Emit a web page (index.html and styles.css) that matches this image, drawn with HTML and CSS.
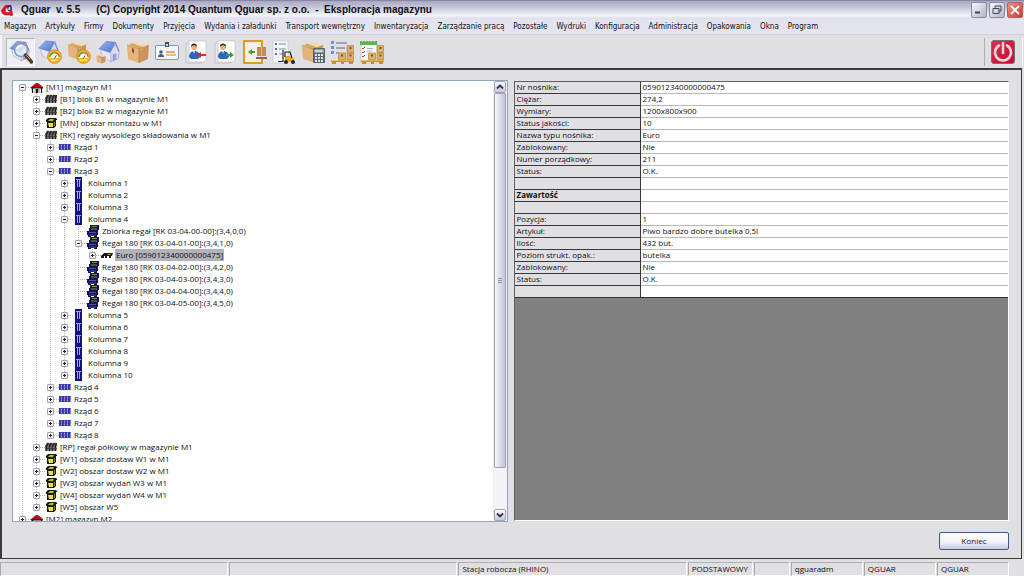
FILE: index.html
```html
<!DOCTYPE html>
<html lang="pl">
<head>
<meta charset="utf-8">
<title>Qguar v. 5.5 - Eksploracja magazynu</title>
<link rel="stylesheet" href="styles.css">
</head>
<body>
<svg class="defs" aria-hidden="true">
  <defs>
    <linearGradient id="roof" x1="0" y1="0" x2="1" y2="1"><stop offset="0" stop-color="#9db8f4"/><stop offset="1" stop-color="#4a6fd0"/></linearGradient>
    <linearGradient id="red" x1="0" y1="0" x2="1" y2="1"><stop offset="0" stop-color="#d8304c"/><stop offset="1" stop-color="#c00c30"/></linearGradient>
    <symbol id="house" viewBox="0 0 24 24">
      <path d="M3 11l2 7 9 5 6-4V8l-6-5z" fill="#e6e6f8" stroke="#a0a0cc" stroke-width=".6"/>
      <path d="M14 12l5-8 4 9-1 7-8 3z" fill="#dcdcf4" stroke="#8c8cc0" stroke-width=".6"/>
      <path d="M16 15l4-1v7l-4 1z" fill="#9c9cd8"/>
      <path d="M1 9L9 1l10 1-6 11z" fill="url(#roof)" stroke="#5570c0" stroke-width=".6"/>
      <path d="M19 2l4 10" stroke="#7c8cd0" stroke-width="1.2"/>
    </symbol>
    <symbol id="box" viewBox="0 0 24 24">
      <path d="M1 5l12 4v14L2 19z" fill="#e4b47c"/>
      <path d="M13 9l10-4-1 14-9 4z" fill="#cc9458"/>
      <path d="M1 5l10-4 12 4-10 4z" fill="#f6dab0"/>
      <path d="M6 3l11 4v3l-3 1-1-2L3 5z" fill="#d4a86c"/>
      <path d="M1 5l12 4 10-4M13 9v14" fill="none" stroke="#b07c44" stroke-width=".6"/>
    </symbol>
    <symbol id="gauge" viewBox="0 0 14 14">
      <circle cx="7" cy="7" r="6.4" fill="#f4b428" stroke="#d08818" stroke-width=".8"/>
      <path d="M2 8.500a5 5 0 0 1 10 0z" fill="#fff"/>
      <path d="M2.6 7.800A4.4 4.4 0 0 1 7 3.4" fill="none" stroke="#48b048" stroke-width="1.6"/>
      <path d="M7 3.4a4.4 4.4 0 0 1 4.4 4.400" fill="none" stroke="#e06038" stroke-width="1.4"/>
      <path d="M7 9l1.500-3" stroke="#444" stroke-width=".8"/>
      <path d="M3.500 10.500h7" stroke="#ffe060" stroke-width="1.4"/>
    </symbol>
    <symbol id="person" viewBox="0 0 24 24">
      <path d="M2 3h16v20H2z" fill="#e4e4ea" stroke="#b0b0bc" stroke-width=".6"/>
      <path d="M5 1h17v19l-2 2H5z" fill="#fff" stroke="#b8b8c4" stroke-width=".6"/>
      <circle cx="10" cy="7" r="3" fill="#e8b078"/>
      <path d="M7 6.500C7 2.500 13 2.500 13 6.500L10 5z" fill="#38281c"/>
      <path d="M5 17c0-8 11-8 11 0l-2 2H7z" fill="#2868b8"/>
      <path d="M9 11h2l-1 3z" fill="#d8ecff"/>
    </symbol>
    <symbol id="crates" viewBox="0 0 24 24">
      <path d="M1 20h23v2H1zM2 22h4v2H2zM11 22h3v2h-3zM19 22h4v2h-4z" fill="#c89028"/>
      <path d="M1 20.500h23" stroke="#f0c860"/>
      <path d="M17 5.500h6.500v7H17zM8.500 13h7v7h-7zM17 13h6.500v7H17z" fill="#d8b070" stroke="#b08840" stroke-width=".7"/>
      <path d="M19.500 7h2v2h-2zM11 14.500h2v2h-2zM19.500 14.500h2v2h-2z" fill="#7c5420"/>
    </symbol>
    <symbol id="t-wh" viewBox="0 0 12 12"><path d="M0 6l5-4h2l5 4v1H0z" fill="#b01020"/><path d="M0 7h12M1.500 7v5M10.500 7v5" stroke="#111" stroke-width="1.200"/><path d="M3 8h6v4H3z" fill="#bbb"/><path d="M5 8h2v4H5z" fill="#111"/></symbol>
    <symbol id="t-block" viewBox="0 0 12 12"><path d="M2 2h10l-1 3v5H0V5z" fill="#aaa"/><path d="M1.500 10V5l2-3M4.500 10V5l2-3M7.500 10V5l2-3M10.500 10V5l1-3" fill="none" stroke="#181818" stroke-width="1.700"/><path d="M0 5h12M0 7.500h12M1 3h10" stroke="#333" stroke-width=".7"/></symbol>
    <symbol id="t-area" viewBox="0 0 12 12"><path d="M3 1h8l1 1v1h-1v6l-2 2H2V5H1V3z" fill="#1c1c0a"/><path d="M3 6h5v4H4z" fill="#e4e048"/><path d="M3 4h5l1-2H5z" fill="#b8b850"/><path d="M9.500 5v4" stroke="#8c8c20"/></symbol>
    <symbol id="t-row" viewBox="0 0 12 12"><path d="M0 3h12v6H0z" fill="#9898dc"/><path d="M1 3v6M4 3v6M7 3v6M10 3v6" stroke="#202090" stroke-width="1.500"/><path d="M0 3.500h12M0 6h12M0 8.500h12" stroke="#3838a4" stroke-width=".6"/></symbol>
    <symbol id="t-col" viewBox="0 0 12 12"><path d="M2 0h7v12H2z" fill="#14147c"/><path d="M3 2.500h5M4.500 3v7M6.500 3v7" stroke="#b4b4e4" stroke-width=".9"/></symbol>
    <symbol id="t-shelf" viewBox="0 0 12 12"><path d="M3 0h9v5h-1v5h-1v2H7v-1H4v1H1v-2H0V6h2V3h1z" fill="#12125c"/><path d="M5 1.500h5M4 4h6" stroke="#8c8c40" stroke-width="1"/><path d="M2 7.500h7M2 10h7" stroke="#6c6cc4" stroke-width=".7"/></symbol>
    <symbol id="t-pallet" viewBox="0 0 12 12"><path d="M3 4h9l-1 3h-1v2H8V7H6v2H4V7H3v2H0V7z" fill="#15152c"/><path d="M7 5h3.500L9.500 6H6z" fill="#a09428"/></symbol>
  </defs>
</svg>

<header class="titlebar">
  <svg class="logo" viewBox="0 0 14 14" aria-hidden="true"><path d="M5 1h5l-3 3-2 1v4h4l1-3 2 1 1 5-2 1-2-1H4L1 10 0 7l3-4z" fill="#e01020"/><path d="M7 2l4-1 1 5-4 2-1-3z" fill="#24246c"/><path d="M8 4l2-1v3L8 7z" fill="#e8e8f8"/></svg>
  <h1>Qguar&nbsp; v. 5.5</h1>
  <span class="copy">(C) Copyright 2014 Quantum Qguar sp. z o.o.&nbsp; -&nbsp; Eksploracja magazynu</span>
  <div class="winbtns">
    <button type="button" aria-label="Minimalizuj"><svg viewBox="0 0 14 14"><path d="M3 9.500h5" stroke="#445" stroke-width="2"/></svg></button>
    <button type="button" aria-label="Przywróć"><svg viewBox="0 0 14 14"><path d="M5 5V3h6v5H9M3 5.500h6v5H3z" fill="none" stroke="#445" stroke-width="1"/></svg></button>
    <button type="button" class="close" aria-label="Zamknij"><svg viewBox="0 0 14 14"><path d="M3 3l8 8M11 3l-8 8" stroke="#fff" stroke-width="1.800"/></svg></button>
  </div>
</header>

<nav class="menu">
  <a href="#">Magazyn</a><a href="#">Artykuły</a><a href="#">Firmy</a><a href="#">Dokumenty</a><a href="#">Przyjęcia</a><a href="#">Wydania i załadunki</a><a href="#">Transport wewnętrzny</a><a href="#">Inwentaryzacja</a><a href="#">Zarządzanie pracą</a><a href="#">Pozostałe</a><a href="#">Wydruki</a><a href="#">Konfiguracja</a><a href="#">Administracja</a><a href="#">Opakowania</a><a href="#">Okna</a><a href="#">Program</a>
</nav>

<div class="toolbar">
  <div class="group">
    <button type="button" class="pressed" aria-label="Eksploracja magazynu"><svg viewBox="0 0 24 24"><use href="#house" width="21" height="22"/><circle cx="12" cy="10" r="6.500" fill="#dfeaf8" fill-opacity=".85" stroke="#8c98b4" stroke-width="1.500"/><path d="M8 9a4 4 0 0 1 5-3" fill="none" stroke="#fff" stroke-width="1.500"/><path d="M16.500 15l6 7" stroke="#54402c" stroke-width="3.500" stroke-linecap="round"/><path d="M17 15l4 4" stroke="#b09878" stroke-width="1"/></svg></button>
    <button type="button" aria-label="Stan magazynu"><svg viewBox="0 0 24 24"><use href="#house" width="21" height="21"/><use href="#gauge" x="9" y="9" width="15" height="15"/></svg></button>
    <button type="button" aria-label="Stan artykułów"><svg viewBox="0 0 24 24"><use href="#box" width="20" height="21"/><use href="#gauge" x="9" y="9" width="15" height="15"/></svg></button>
    <button type="button" aria-label="Miejsca"><svg viewBox="0 0 24 24"><use href="#house" x="2" width="22" height="23"/><use href="#box" x="0" y="14" width="10" height="10"/></svg></button>
  </div>
  <div class="group">
    <button type="button" aria-label="Artykuły"><svg viewBox="0 0 24 24"><use href="#box" width="24" height="24"/><path d="M6 8l2 1v5l-1-2-1 1z" fill="#805428"/></svg></button>
    <button type="button" aria-label="Firmy"><svg viewBox="0 0 24 24"><rect x=".5" y="5.500" width="23" height="14" rx="1.500" fill="#f4f8ff" stroke="#7c98c4"/><path d="M10 2h4v5h-4z" fill="#445068"/><path d="M11 4h2v2h-2z" fill="#c8d4e8"/><circle cx="6" cy="12" r="1.800" fill="#4c5c78"/><path d="M3 17c0-4 6-4 6 0z" fill="#4c5c78"/><path d="M11 12h9" stroke="#f09030" stroke-width="1.500"/><path d="M11 15h10" stroke="#f0a850" stroke-width="1.500"/></svg></button>
    <button type="button" aria-label="Przyjęcie"><svg viewBox="0 0 24 24"><use href="#person" width="24" height="24"/><path d="M13 15l4-3v2h5v2h-5v2z" fill="#e02830"/></svg></button>
    <button type="button" aria-label="Wydanie"><svg viewBox="0 0 24 24"><use href="#person" width="24" height="24"/><path d="M21 15l-4-3v2h-4v2h4v2z" fill="#30a838"/></svg></button>
  </div>
  <div class="group">
    <button type="button" aria-label="Dostawa"><svg viewBox="0 0 24 24"><path d="M1 1h18v22H1z" fill="#f4f0e8" stroke="#dc9c28" stroke-width="2"/><path d="M19 7v11" stroke="#e4e4ec" stroke-width="3"/><path d="M5 12l4-3v2h3v2H9v2z" fill="#48a030"/><path d="M14 7h9v9h-9z" fill="#c08c60"/><path d="M18.500 7v9" stroke="#e0b890" stroke-width="1"/><path d="M13 17h11v2H13z" fill="#986438"/></svg></button>
    <button type="button" aria-label="Transport"><svg viewBox="0 0 24 24"><path d="M1 1h15v22H1z" fill="#f6f8ff" stroke="#c0c8dc" stroke-width=".6"/><path d="M3 3h2v2H3zM3 8h2v2H3zM3 13h2v2H3z" fill="#5070b8"/><path d="M7 4h7M7 9h7M7 14h4" stroke="#7c8498" stroke-width="1"/><path d="M13 16h5l2 2h2v4h-9z" fill="#e8a820"/><path d="M13 17V12h5l2 6" fill="none" stroke="#222" stroke-width="1.200"/><path d="M11 10v12M6 21.500h5" stroke="#28282c" stroke-width="1.200"/><circle cx="14" cy="22" r="2" fill="#222"/><circle cx="21" cy="22" r="2" fill="#222"/></svg></button>
    <button type="button" aria-label="Inwentaryzacja"><svg viewBox="0 0 24 24"><use href="#box" width="23" height="24"/><rect x="12" y="8" width="12" height="15" rx="1" fill="#5c6470"/><path d="M13.500 9.500h9v3h-9z" fill="#c4dcc0"/><path d="M14 15h8M14 18h8M14 21h8" stroke="#e0e4ec" stroke-width="1.800" stroke-dasharray="2 1"/></svg></button>
    <button type="button" aria-label="Lista palet"><svg viewBox="0 0 24 24"><path d="M1 1h3v3H1zM1 6h3v3H1zM1 11h3v3H1z" fill="#7090d0"/><path d="M6 3h11M6 8h9M6 13h3" stroke="#606878" stroke-width="1"/><use href="#crates" width="24" height="24"/></svg></button>
  </div>
  <div class="group">
    <button type="button" aria-label="Kontrola palet"><svg viewBox="0 0 24 24"><path d="M1 2h16v21H1z" fill="#fbfbff" stroke="#a8c8a0" stroke-width=".6"/><path d="M0 1h17v4H0z" fill="#58b848"/><path d="M2 1h14" stroke="#e0f4dc" stroke-dasharray="1 2"/><path d="M2 8l1 1 2-2M2 12l1 1 2-2M2 16l1 1 2-2" fill="none" stroke="#d03848"/><path d="M7 8.500h6M7 11h5" stroke="#9098a8" stroke-width=".8"/><use href="#crates" width="24" height="24"/></svg></button>
  </div>
  <div class="exit">
    <button type="button" aria-label="Wyjście"><svg viewBox="0 0 24 24"><rect x=".5" y=".5" width="23" height="23" rx="2.500" fill="url(#red)" stroke="#806c74"/><path d="M8 5.500a8 8 0 1 0 8 0" fill="none" stroke="#ecd4dc" stroke-width="2.600" stroke-linecap="round"/><path d="M12 3v10" stroke="#ecd4dc" stroke-width="2.600" stroke-linecap="round"/></svg></button>
  </div>
</div>

<main class="workspace">
  <div class="panes">
    <section class="treebox" aria-label="Struktura magazynu">
      <ul class="tree">
        <li><div class="node"><button class="tw minus" aria-label="Zwiń"></button><i></i><svg><use href="#t-wh"/></svg><span>[M1] magazyn M1</span></div>
          <ul>
            <li><div class="node"><button class="tw" aria-label="Rozwiń"></button><i></i><svg><use href="#t-block"/></svg><span>[B1] blok B1 w magazynie M1</span></div></li>
            <li><div class="node"><button class="tw" aria-label="Rozwiń"></button><i></i><svg><use href="#t-block"/></svg><span>[B2] blok B2 w magazynie M1</span></div></li>
            <li><div class="node"><button class="tw" aria-label="Rozwiń"></button><i></i><svg><use href="#t-area"/></svg><span>[MN] obszar montażu w M1</span></div></li>
            <li><div class="node"><button class="tw minus" aria-label="Zwiń"></button><i></i><svg><use href="#t-block"/></svg><span>[RK] regały wysokiego składowania w M1</span></div>
              <ul>
                <li><div class="node"><button class="tw" aria-label="Rozwiń"></button><i></i><svg><use href="#t-row"/></svg><span>Rząd 1</span></div></li>
                <li><div class="node"><button class="tw" aria-label="Rozwiń"></button><i></i><svg><use href="#t-row"/></svg><span>Rząd 2</span></div></li>
                <li><div class="node"><button class="tw minus" aria-label="Zwiń"></button><i></i><svg><use href="#t-row"/></svg><span>Rząd 3</span></div>
                  <ul>
                    <li><div class="node"><button class="tw" aria-label="Rozwiń"></button><i></i><svg><use href="#t-col"/></svg><span>Kolumna 1</span></div></li>
                    <li><div class="node"><button class="tw" aria-label="Rozwiń"></button><i></i><svg><use href="#t-col"/></svg><span>Kolumna 2</span></div></li>
                    <li><div class="node"><button class="tw" aria-label="Rozwiń"></button><i></i><svg><use href="#t-col"/></svg><span>Kolumna 3</span></div></li>
                    <li><div class="node"><button class="tw minus" aria-label="Zwiń"></button><i></i><svg><use href="#t-col"/></svg><span>Kolumna 4</span></div>
                      <ul>
                        <li><div class="node leaf"><i></i><svg><use href="#t-shelf"/></svg><span>Zbiórka regał [RK 03-04-00-00]:(3,4,0,0)</span></div></li>
                        <li><div class="node"><button class="tw minus" aria-label="Zwiń"></button><i></i><svg><use href="#t-shelf"/></svg><span>Regał 180 [RK 03-04-01-00]:(3,4,1,0)</span></div>
                          <ul>
                            <li><div class="node"><button class="tw" aria-label="Rozwiń"></button><i></i><svg><use href="#t-pallet"/></svg><span class="selected">Euro [059012340000000475]</span></div></li>
                          </ul>
                        </li>
                        <li><div class="node leaf"><i></i><svg><use href="#t-shelf"/></svg><span>Regał 180 [RK 03-04-02-00]:(3,4,2,0)</span></div></li>
                        <li><div class="node leaf"><i></i><svg><use href="#t-shelf"/></svg><span>Regał 180 [RK 03-04-03-00]:(3,4,3,0)</span></div></li>
                        <li><div class="node leaf"><i></i><svg><use href="#t-shelf"/></svg><span>Regał 180 [RK 03-04-04-00]:(3,4,4,0)</span></div></li>
                        <li><div class="node leaf"><i></i><svg><use href="#t-shelf"/></svg><span>Regał 180 [RK 03-04-05-00]:(3,4,5,0)</span></div></li>
                      </ul>
                    </li>
                    <li><div class="node"><button class="tw" aria-label="Rozwiń"></button><i></i><svg><use href="#t-col"/></svg><span>Kolumna 5</span></div></li>
                    <li><div class="node"><button class="tw" aria-label="Rozwiń"></button><i></i><svg><use href="#t-col"/></svg><span>Kolumna 6</span></div></li>
                    <li><div class="node"><button class="tw" aria-label="Rozwiń"></button><i></i><svg><use href="#t-col"/></svg><span>Kolumna 7</span></div></li>
                    <li><div class="node"><button class="tw" aria-label="Rozwiń"></button><i></i><svg><use href="#t-col"/></svg><span>Kolumna 8</span></div></li>
                    <li><div class="node"><button class="tw" aria-label="Rozwiń"></button><i></i><svg><use href="#t-col"/></svg><span>Kolumna 9</span></div></li>
                    <li><div class="node"><button class="tw" aria-label="Rozwiń"></button><i></i><svg><use href="#t-col"/></svg><span>Kolumna 10</span></div></li>
                  </ul>
                </li>
                <li><div class="node"><button class="tw" aria-label="Rozwiń"></button><i></i><svg><use href="#t-row"/></svg><span>Rząd 4</span></div></li>
                <li><div class="node"><button class="tw" aria-label="Rozwiń"></button><i></i><svg><use href="#t-row"/></svg><span>Rząd 5</span></div></li>
                <li><div class="node"><button class="tw" aria-label="Rozwiń"></button><i></i><svg><use href="#t-row"/></svg><span>Rząd 6</span></div></li>
                <li><div class="node"><button class="tw" aria-label="Rozwiń"></button><i></i><svg><use href="#t-row"/></svg><span>Rząd 7</span></div></li>
                <li><div class="node"><button class="tw" aria-label="Rozwiń"></button><i></i><svg><use href="#t-row"/></svg><span>Rząd 8</span></div></li>
              </ul>
            </li>
            <li><div class="node"><button class="tw" aria-label="Rozwiń"></button><i></i><svg><use href="#t-block"/></svg><span>[RP] regał półkowy w magazynie M1</span></div></li>
            <li><div class="node"><button class="tw" aria-label="Rozwiń"></button><i></i><svg><use href="#t-area"/></svg><span>[W1] obszar dostaw W1 w M1</span></div></li>
            <li><div class="node"><button class="tw" aria-label="Rozwiń"></button><i></i><svg><use href="#t-area"/></svg><span>[W2] obszar dostaw W2 w M1</span></div></li>
            <li><div class="node"><button class="tw" aria-label="Rozwiń"></button><i></i><svg><use href="#t-area"/></svg><span>[W3] obszar wydań W3 w M1</span></div></li>
            <li><div class="node"><button class="tw" aria-label="Rozwiń"></button><i></i><svg><use href="#t-area"/></svg><span>[W4] obszar wydań W4 w M1</span></div></li>
            <li><div class="node"><button class="tw" aria-label="Rozwiń"></button><i></i><svg><use href="#t-area"/></svg><span>[W5] obszar W5</span></div></li>
          </ul>
        </li>
        <li><div class="node"><button class="tw" aria-label="Rozwiń"></button><i></i><svg><use href="#t-wh"/></svg><span>[M2] magazyn M2</span></div></li>
      </ul>
      <div class="scroll">
        <button type="button" aria-label="W górę"><svg viewBox="0 0 10 10"><path d="M2 6.500l3-3 3 3" fill="none" stroke="#334" stroke-width="1.800"/></svg></button>
        <div class="track"><div class="thumb"></div><div class="rest"></div></div>
        <button type="button" aria-label="W dół"><svg viewBox="0 0 10 10"><path d="M2 3.500l3 3 3-3" fill="none" stroke="#334" stroke-width="1.800"/></svg></button>
      </div>
    </section>

    <section class="details" aria-label="Szczegóły">
      <table>
        <tbody>
          <tr><th scope="row">Nr nośnika:</th><td>059012340000000475</td></tr>
          <tr><th scope="row">Ciężar:</th><td>274,2</td></tr>
          <tr><th scope="row">Wymiary:</th><td>1200x800x900</td></tr>
          <tr><th scope="row">Status jakości:</th><td>10</td></tr>
          <tr><th scope="row">Nazwa typu nośnika:</th><td>Euro</td></tr>
          <tr><th scope="row">Zablokowany:</th><td>Nie</td></tr>
          <tr><th scope="row">Numer porządkowy:</th><td>211</td></tr>
          <tr><th scope="row">Status:</th><td>O.K.</td></tr>
          <tr><th></th><td></td></tr>
          <tr><th scope="row" class="strong">Zawartość</th><td></td></tr>
          <tr><th></th><td></td></tr>
          <tr><th scope="row">Pozycja:</th><td>1</td></tr>
          <tr><th scope="row">Artykuł:</th><td>Piwo bardzo dobre butelka 0,5l</td></tr>
          <tr><th scope="row">Ilość:</th><td>432 but.</td></tr>
          <tr><th scope="row">Poziom strukt. opak.:</th><td>butelka</td></tr>
          <tr><th scope="row">Zablokowany:</th><td>Nie</td></tr>
          <tr><th scope="row">Status:</th><td>O.K.</td></tr>
          <tr><th></th><td></td></tr>
        </tbody>
      </table>
    </section>
  </div>
  <div class="actions"><button type="button" class="end">Koniec</button></div>
</main>

<footer class="status">
  <span class="wide"></span><span class="wide"></span><span class="wide">Stacja robocza (RHINO)</span><span class="mode">PODSTAWOWY</span><span class="small"></span><span class="mid">qguaradm</span><span class="mid">QGUAR</span><span class="mid">QGUAR</span><span class="grip"></span>
</footer>
</body>
</html>
```
FILE: styles.css
```css
* { box-sizing: border-box; }

body {
  margin: 0;
  height: 100vh;
  display: flex;
  flex-direction: column;
  overflow: hidden;
  background: #e0dfe4;
  color: #101014;
  font: 8px/12px "Open Sans", "Noto Sans", sans-serif;
}

button { padding: 0; border: 0; background: none; font: inherit; color: inherit; }
svg { display: block; }
ul { list-style: none; margin: 0; padding: 0; }
.defs { position: absolute; width: 0; height: 0; }

/* Title bar */
.titlebar {
  display: flex;
  align-items: center;
  height: 19px;
  padding: 0 1px;
  border-top: 1px solid #8886a4;
  background: linear-gradient(#a9a8c2, #c6c5d8 35%, #f4f4fa 80%, #dcdce8);
  font: bold 10px/18px "Liberation Sans", Arial, sans-serif;
  white-space: nowrap;
}
.logo { width: 13px; height: 13px; margin-right: 7px; }
.titlebar h1 { margin: 0 16px 0 0; font: inherit; }
.winbtns { display: flex; gap: 2px; margin-left: auto; }
.winbtns button {
  width: 16px;
  height: 16px;
  border: 1px solid #8a8aa6;
  border-radius: 2px;
  background: linear-gradient(135deg, #f6f6fc, #b4b4cc);
}
.winbtns .close { border-color: #b06060; background: linear-gradient(135deg, #f09084, #c83c34); }

/* Menu */
.menu {
  display: flex;
  gap: 9px;
  height: 16px;
  padding-left: 4px;
  border-bottom: 1px solid #d4d2d4;
  background: #e4e4f0;
  font: 8px/15px "DejaVu Sans Condensed", "DejaVu Sans", sans-serif;
  white-space: nowrap;
}
.menu a { color: #101014; text-decoration: none; }

/* Toolbar */
.toolbar { display: flex; gap: 1px; height: 33px; padding: 3px 1px 2px 4px; border-left: 2px solid #f4f4f8; }
.group { display: flex; }
.toolbar button { display: grid; place-items: center; width: 29px; height: 28px; }
.toolbar svg { width: 24px; height: 24px; }
.toolbar .pressed { border: 1px solid; border-color: #b4b4bc #fff #fff #b4b4bc; background: #efeff3; }
.exit { display: flex; margin-left: auto; padding: 0 5px 0 3px; border-left: 1px solid #b0b0b4; border-right: 1px solid #fff; }

/* Work area */
.workspace {
  flex: 1;
  min-height: 0;
  display: flex;
  flex-direction: column;
  margin-right: 2px;
  padding: 10px 12px 8px 10px;
  border: 2px solid #3c3c3c;
  border-width: 2px 1px 1px 2px;
}
.panes { flex: 1; min-height: 0; display: grid; grid-template-columns: 1fr 1fr; gap: 6px; }

.treebox { display: flex; min-height: 0; border: 1px solid #8fa6bd; background: #fff; overflow: hidden; }
.tree { flex: 1; padding-left: 6px; overflow: hidden; }
.tree ul { padding-left: 14px; }
.tree li {
  background: repeating-linear-gradient(#b8b8b8 0 1px, transparent 1px 2px) 3px 0 / 1px 100% no-repeat;
}
.tree ul > li:last-child { background-size: 1px 6px; }
.tree > li:first-child { background-position: 3px 6px; }
.node { display: flex; align-items: center; height: 12px; white-space: nowrap; }
.node i { width: 5px; height: 1px; background: repeating-linear-gradient(90deg, #b8b8b8 0 1px, transparent 1px 2px); }
.node.leaf i { width: 9px; margin-left: 3px; }
.node svg { width: 12px; height: 12px; margin-right: 2px; }
.node span { padding: 0 1px; }
.node .selected { background: #b2b2ba; }
.tw {
  width: 7px;
  height: 7px;
  border: 1px solid #a0a0b0;
  border-radius: 1px;
  background:
    linear-gradient(#222, #222) 1px 2px / 3px 1px no-repeat,
    linear-gradient(#222, #222) 2px 1px / 1px 3px no-repeat,
    #f2f2f6;
}
.tw.minus { background: linear-gradient(#222, #222) 1px 2px / 3px 1px no-repeat, #f2f2f6; }

.scroll { display: flex; flex-direction: column; width: 14px; padding-right: 1px; background: #f4f4f8; border-left: 1px solid #eeeef2; }
.scroll button {
  display: grid;
  place-items: center;
  height: 12px;
  border: 1px solid #a4a4b8;
  border-radius: 2px;
  background: linear-gradient(#f8f8fc, #c8c8dc);
}
.scroll button svg { width: 10px; height: 10px; }
.track { flex: 1; display: flex; flex-direction: column; }
.thumb {
  flex: 9;
  border: 1px solid #a0a0b4;
  border-radius: 1px;
  background:
    repeating-linear-gradient(#9090a8 0 1px, transparent 1px 2px) center / 4px 5px no-repeat,
    linear-gradient(90deg, #f6f6fc, #c4c4d6);
}
.rest { flex: 1; }

.details { margin: 1px 0; background: #808080; border: 1px solid #606060; border-color: #606060 #fff #fff #606060; overflow: hidden; }
.details table { width: 100%; border-collapse: separate; border-spacing: 0; table-layout: fixed; border-bottom: 1px solid #303030; }
.details th, .details td { height: 12px; padding: 0 2px 1px; line-height: 10px; text-align: left; font-weight: normal; white-space: nowrap; }
.details th { width: 126px; background: #e0dfe4; border-bottom: 1px solid #383838; border-right: 1px solid #383838; }
.details td { background: #fff; border-bottom: 1px solid #b8b8b8; }
.details tr:last-child > * { border-bottom: 0; height: 11px; }
.details .strong { font-weight: bold; }

.actions { display: flex; justify-content: flex-end; padding-top: 10px; }
.end {
  width: 70px;
  height: 18px;
  border: 1px solid #3c5c84;
  border-radius: 2px;
  background: linear-gradient(#fff, #f0f0f8 60%, #c8c8dc);
}

/* Status bar */
.status { display: flex; gap: 1px; height: 17px; padding-top: 3px; background: #e0dfe4; white-space: nowrap; }
.status span { flex-basis: 0; min-width: 0; padding: 0 3px; border: 1px solid #b0b0b4; border-color: #b0b0b4 #fff #fff #a8a8ac; }
.status .wide { flex-grow: 220; }
.status .mode { flex-grow: 57; }
.status .small { flex-grow: 28; }
.status .mid { flex-grow: 64; }
.status .grip { flex-grow: 12; padding: 0; border-color: transparent; }
```
